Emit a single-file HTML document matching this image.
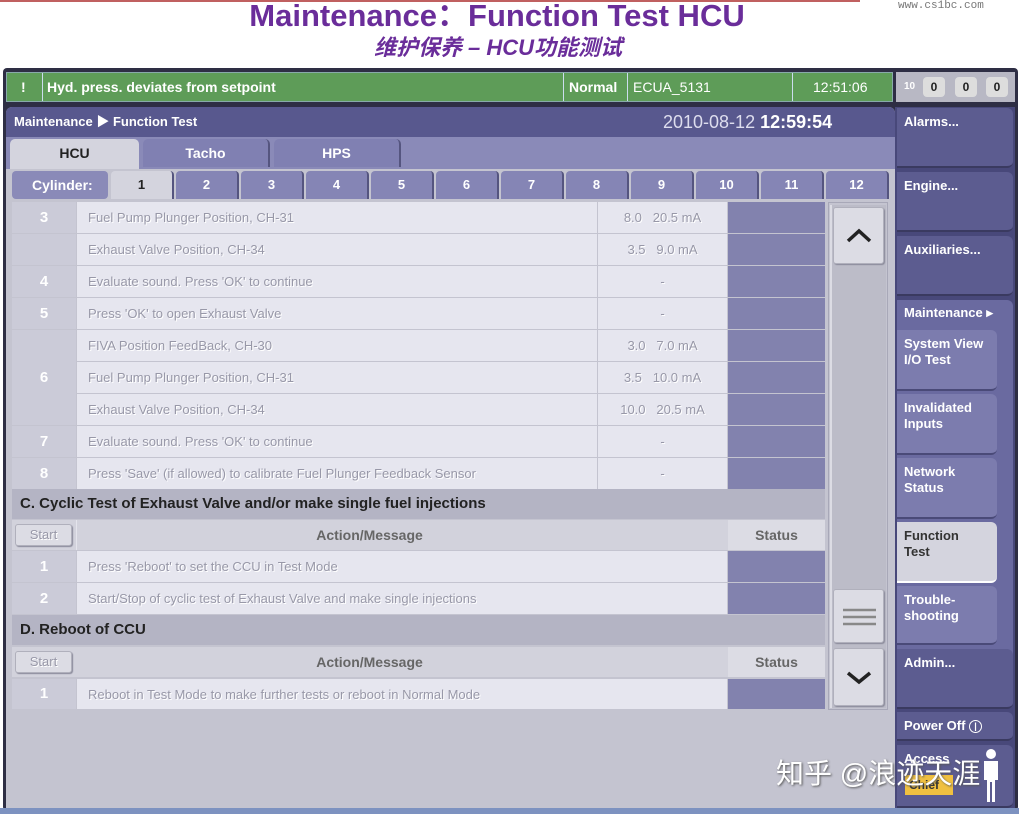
<!DOCTYPE html><html><head><meta charset="utf-8"><style>
*{margin:0;padding:0;box-sizing:border-box}
body{width:1019px;height:814px;position:relative;overflow:hidden;background:#fff;font-family:"Liberation Sans","Noto Sans CJK SC",sans-serif;font-weight:bold}
.a{position:absolute}
.row div{position:absolute;top:0;height:31px;line-height:31px}
.gt{color:#9898a8;font-weight:normal;font-size:13px;text-shadow:1px 1px 0 #fff}
.nav{position:absolute;left:897px;width:116px;background:#5c5c90;color:#fff;font-size:13px;padding:6px 7px;border-radius:0 6px 6px 0;border-bottom:2px solid #3a3a60}
.sub{position:absolute;left:897px;width:100px;background:#7c7cae;color:#fff;font-size:13px;padding:6px 7px;line-height:16px;border-radius:0 6px 6px 0;border-bottom:2px solid #4a4a78}
.ct{position:absolute;top:171px;height:28px;line-height:28px;text-align:center;background:#8585b5;color:#fff;font-size:13px;border-radius:4px 4px 0 0;border-right:2px solid #55557f}
.hdr{position:absolute;left:12px;width:813px;height:30px;background:#b4b4c4;color:#222;font-size:15px;line-height:30px;padding-left:8px}
.btn{position:absolute;background:#dcdce4;border:1px solid #b0b0bc;border-radius:3px;box-shadow:1px 1px 1px #8a8a9a}
</style></head><body>
<div class="a" style="left:0;top:0;width:860px;height:2px;background:#c06060"></div>
<div class="a" style="left:898px;top:0;font:11px 'Liberation Mono',monospace;color:#777">www.cs1bc.com</div>
<div class="a" style="left:0;top:0;width:994px;text-align:center;font-size:31px;color:#6a2d9a;line-height:32px">Maintenance：Function Test HCU</div>
<div class="a" style="left:0;top:34px;width:996px;text-align:center;font-size:22px;color:#6a2d9a;font-style:italic;line-height:28px">维护保养 – HCU功能测试</div>
<div class="a" style="left:3px;top:68px;width:1015px;height:743px;background:#2e2e44;border-radius:4px"></div>
<div class="a" style="left:0;top:808px;width:1019px;height:6px;background:#7d92c0"></div>
<!-- status bar -->
<div class="a" style="left:6px;top:72px;width:887px;height:30px;background:#5e9c58;border:1px solid #8aa;color:#fff;font-size:14px;line-height:28px">
<span class="a" style="left:14px">!</span><span class="a" style="left:35px;top:0;height:28px;border-left:1px solid #cde"></span>
<span class="a" style="left:40px">Hyd. press. deviates from setpoint</span>
<span class="a" style="left:556px;height:28px;border-left:1px solid #cde"></span><span class="a" style="left:562px">Normal</span>
<span class="a" style="left:620px;height:28px;border-left:1px solid #cde"></span><span class="a" style="left:626px;font-weight:normal">ECUA_5131</span>
<span class="a" style="left:785px;height:28px;border-left:1px solid #cde"></span><span class="a" style="left:806px;font-weight:normal">12:51:06</span></div>
<div class="a" style="left:896px;top:72px;width:119px;height:30px;background:#b8b8c4;font-size:12px;line-height:30px;color:#222">
<span class="a" style="left:8px;color:#fff;font-size:10px">10</span><span class="a" style="left:27px;top:5px;width:22px;height:20px;background:#ddd;border-radius:4px;line-height:20px;text-align:center">0</span><span class="a" style="left:59px;top:5px;width:22px;height:20px;background:#ddd;border-radius:4px;line-height:20px;text-align:center">0</span><span class="a" style="left:90px;top:5px;width:22px;height:20px;background:#ddd;border-radius:4px;line-height:20px;text-align:center">0</span></div>
<!-- main panel -->
<div class="a" style="left:6px;top:107px;width:889px;height:701px;background:#c4c4d0;border-radius:6px 6px 0 0"></div>
<div class="a" style="left:6px;top:107px;width:889px;height:30px;background:#58588e;border-radius:6px 6px 0 0;color:#fff;font-size:13px;line-height:30px;padding-left:8px">Maintenance ▶ Function Test<span class="a" style="left:657px;font-size:18px;font-weight:normal;color:#dde">2010-08-12 <b style="color:#fff">12:59:54</b></span></div>
<div class="a" style="left:6px;top:137px;width:889px;height:32px;background:#8a8ab8"></div>
<div class="a" style="left:10px;top:139px;width:129px;height:30px;background:#d4d4de;border-radius:5px 5px 0 0;text-align:center;line-height:28px;font-size:14px;color:#222">HCU</div>
<div class="a" style="left:143px;top:139px;width:127px;height:28px;background:#8080b2;border-radius:5px 5px 0 0;border-right:2px solid #55557f;text-align:center;line-height:28px;font-size:14px;color:#fff">Tacho</div>
<div class="a" style="left:274px;top:139px;width:127px;height:28px;background:#8080b2;border-radius:5px 5px 0 0;border-right:2px solid #55557f;text-align:center;line-height:28px;font-size:14px;color:#fff">HPS</div>
<div class="a" style="left:12px;top:171px;width:96px;height:28px;background:#8a8ab8;border-radius:4px;color:#fff;font-size:14px;line-height:28px;padding-left:20px">Cylinder:</div>
<div class="ct" style="left:111px;width:63px;background:#d4d4de;color:#222">1</div>
<div class="ct" style="left:176px;width:63px">2</div><div class="ct" style="left:241px;width:63px">3</div><div class="ct" style="left:306px;width:63px">4</div><div class="ct" style="left:371px;width:63px">5</div><div class="ct" style="left:436px;width:63px">6</div><div class="ct" style="left:501px;width:63px">7</div><div class="ct" style="left:566px;width:63px">8</div><div class="ct" style="left:631px;width:63px">9</div><div class="ct" style="left:696px;width:63px">10</div><div class="ct" style="left:761px;width:63px">11</div><div class="ct" style="left:826px;width:63px">12</div>
<!-- rows A/B -->
<div class="a" style="left:12px;top:202px;width:64px;height:31px;background:#cbcbd8;color:#fff;font-size:15px;text-align:center;line-height:31px">3</div>
<div class="a" style="left:12px;top:234px;width:64px;height:31px;background:#cbcbd8"></div>
<div class="a" style="left:12px;top:266px;width:64px;height:31px;background:#cbcbd8;color:#fff;font-size:15px;text-align:center;line-height:31px">4</div>
<div class="a" style="left:12px;top:298px;width:64px;height:31px;background:#cbcbd8;color:#fff;font-size:15px;text-align:center;line-height:31px">5</div>
<div class="a" style="left:12px;top:330px;width:64px;height:95px;background:#cbcbd8;color:#fff;font-size:15px;text-align:center;line-height:95px">6</div>
<div class="a" style="left:12px;top:426px;width:64px;height:31px;background:#cbcbd8;color:#fff;font-size:15px;text-align:center;line-height:31px">7</div>
<div class="a" style="left:12px;top:458px;width:64px;height:31px;background:#cbcbd8;color:#fff;font-size:15px;text-align:center;line-height:31px">8</div>
<div class="a row" style="left:0;top:202px"><div class="gt" style="left:77px;width:520px;background:#e6e6ef;padding-left:11px">Fuel Pump Plunger Position, CH-31</div><div class="gt" style="left:598px;width:129px;background:#e6e6ef;text-align:center">8.0 &nbsp; 20.5 mA</div><div style="left:728px;width:97px;background:#8282ae"></div></div>
<div class="a row" style="left:0;top:234px"><div class="gt" style="left:77px;width:520px;background:#e6e6ef;padding-left:11px">Exhaust Valve Position, CH-34</div><div class="gt" style="left:598px;width:129px;background:#e6e6ef;text-align:center">3.5 &nbsp; 9.0 mA</div><div style="left:728px;width:97px;background:#8282ae"></div></div>
<div class="a row" style="left:0;top:266px"><div class="gt" style="left:77px;width:520px;background:#e6e6ef;padding-left:11px">Evaluate sound. Press 'OK' to continue</div><div class="gt" style="left:598px;width:129px;background:#e6e6ef;text-align:center">-</div><div style="left:728px;width:97px;background:#8282ae"></div></div>
<div class="a row" style="left:0;top:298px"><div class="gt" style="left:77px;width:520px;background:#e6e6ef;padding-left:11px">Press 'OK' to open Exhaust Valve</div><div class="gt" style="left:598px;width:129px;background:#e6e6ef;text-align:center">-</div><div style="left:728px;width:97px;background:#8282ae"></div></div>
<div class="a row" style="left:0;top:330px"><div class="gt" style="left:77px;width:520px;background:#e6e6ef;padding-left:11px">FIVA Position FeedBack, CH-30</div><div class="gt" style="left:598px;width:129px;background:#e6e6ef;text-align:center">3.0 &nbsp; 7.0 mA</div><div style="left:728px;width:97px;background:#8282ae"></div></div>
<div class="a row" style="left:0;top:362px"><div class="gt" style="left:77px;width:520px;background:#e6e6ef;padding-left:11px">Fuel Pump Plunger Position, CH-31</div><div class="gt" style="left:598px;width:129px;background:#e6e6ef;text-align:center">3.5 &nbsp; 10.0 mA</div><div style="left:728px;width:97px;background:#8282ae"></div></div>
<div class="a row" style="left:0;top:394px"><div class="gt" style="left:77px;width:520px;background:#e6e6ef;padding-left:11px">Exhaust Valve Position, CH-34</div><div class="gt" style="left:598px;width:129px;background:#e6e6ef;text-align:center">10.0 &nbsp; 20.5 mA</div><div style="left:728px;width:97px;background:#8282ae"></div></div>
<div class="a row" style="left:0;top:426px"><div class="gt" style="left:77px;width:520px;background:#e6e6ef;padding-left:11px">Evaluate sound. Press 'OK' to continue</div><div class="gt" style="left:598px;width:129px;background:#e6e6ef;text-align:center">-</div><div style="left:728px;width:97px;background:#8282ae"></div></div>
<div class="a row" style="left:0;top:458px"><div class="gt" style="left:77px;width:520px;background:#e6e6ef;padding-left:11px">Press 'Save' (if allowed) to calibrate Fuel Plunger Feedback Sensor</div><div class="gt" style="left:598px;width:129px;background:#e6e6ef;text-align:center">-</div><div style="left:728px;width:97px;background:#8282ae"></div></div>
<!-- C -->
<div class="hdr" style="top:489px">C. Cyclic Test of Exhaust Valve and/or make single fuel injections</div>
<div class="a" style="left:12px;top:520px;width:813px;height:30px;background:#d2d2dc;color:#666;font-size:14px;line-height:30px"><span class="a" style="left:0;width:715px;text-align:center">Action/Message</span><span class="a" style="left:716px;width:97px;text-align:center;background:#dcdce4">Status</span><span class="a" style="left:64px;height:30px;border-left:1px solid #e4e4ec"></span></div>
<div class="btn gt" style="left:15px;top:524px;width:57px;height:22px;line-height:20px;text-align:center">Start</div>
<div class="a" style="left:12px;top:551px;width:64px;height:31px;background:#cbcbd8;color:#fff;font-size:15px;text-align:center;line-height:31px">1</div>
<div class="a" style="left:12px;top:583px;width:64px;height:31px;background:#cbcbd8;color:#fff;font-size:15px;text-align:center;line-height:31px">2</div>
<div class="a row" style="left:0;top:551px"><div class="gt" style="left:77px;width:650px;background:#e6e6ef;padding-left:11px">Press 'Reboot' to set the CCU in Test Mode</div><div style="left:728px;width:97px;background:#8282ae"></div></div>
<div class="a row" style="left:0;top:583px"><div class="gt" style="left:77px;width:650px;background:#e6e6ef;padding-left:11px">Start/Stop of cyclic test of Exhaust Valve and make single injections</div><div style="left:728px;width:97px;background:#8282ae"></div></div>
<!-- D -->
<div class="hdr" style="top:615px">D. Reboot of CCU</div>
<div class="a" style="left:12px;top:647px;width:813px;height:30px;background:#d2d2dc;color:#666;font-size:14px;line-height:30px"><span class="a" style="left:0;width:715px;text-align:center">Action/Message</span><span class="a" style="left:716px;width:97px;text-align:center;background:#dcdce4">Status</span></div>
<div class="btn gt" style="left:15px;top:651px;width:57px;height:22px;line-height:20px;text-align:center">Start</div>
<div class="a" style="left:12px;top:679px;width:64px;height:30px;background:#cbcbd8;color:#fff;font-size:15px;text-align:center;line-height:30px">1</div>
<div class="a row" style="left:0;top:679px"><div class="gt" style="left:77px;width:650px;background:#e6e6ef;padding-left:11px;height:30px">Reboot in Test Mode to make further tests or reboot in Normal Mode</div><div style="left:728px;width:97px;background:#8282ae;height:30px"></div></div>
<!-- scroll -->
<div class="a" style="left:828px;top:202px;width:60px;height:508px;background:#c4c4d0;border:1px solid #a8a8b8"></div>
<div class="a" style="left:830px;top:205px;width:56px;height:503px;background:#bcbcc8;border-left:2px solid #dcdce4"></div>
<div class="btn" style="left:833px;top:207px;width:51px;height:57px"><svg width="51" height="57"><path d="M14 33 L25 23 L36 33" stroke="#222" stroke-width="3.5" fill="none"/></svg></div>
<div class="btn" style="left:833px;top:589px;width:51px;height:54px"><svg width="51" height="54"><path d="M9 20H42M9 27H42M9 34H42" stroke="#888" stroke-width="2.5"/></svg></div>
<div class="btn" style="left:833px;top:648px;width:51px;height:58px"><svg width="51" height="58"><path d="M14 24 L25 33 L36 24" stroke="#222" stroke-width="3.5" fill="none"/></svg></div>
<!-- nav -->
<div class="a" style="left:895px;top:107px;width:120px;height:701px;background:#48487a"></div>
<div class="nav" style="top:108px;height:60px">Alarms...</div>
<div class="nav" style="top:172px;height:60px">Engine...</div>
<div class="nav" style="top:236px;height:60px">Auxiliaries...</div>
<div class="a" style="left:897px;top:300px;width:116px;height:408px;background:#6a6aa0;border-radius:0 6px 6px 0"></div>
<div class="a" style="left:904px;top:305px;color:#fff;font-size:13px">Maintenance ▸</div>
<div class="sub" style="top:330px;height:61px">System View<br>I/O Test</div>
<div class="sub" style="top:394px;height:61px">Invalidated<br>Inputs</div>
<div class="sub" style="top:458px;height:61px">Network<br>Status</div>
<div class="sub" style="top:522px;height:61px;background:#d4d4de;color:#333;border-bottom-color:#fff">Function<br>Test</div>
<div class="sub" style="top:586px;height:59px">Trouble-<br>shooting</div>
<div class="nav" style="top:649px;height:60px">Admin...</div>
<div class="nav" style="top:712px;height:29px">Power Off <span style="display:inline-block;width:13px;height:13px;border:1.5px solid #fff;border-radius:50%;font-size:9px;text-align:center;line-height:10px;vertical-align:middle">|</span></div>
<div class="nav" style="top:745px;height:63px">Access<div class="a" style="left:8px;top:30px;width:48px;height:20px;background:#f0c040;color:#333;font-size:12px;line-height:20px;padding-left:4px">Chief</div>
<svg class="a" style="left:84px;top:3px" width="20" height="56"><circle cx="10" cy="6" r="5" fill="#fff"/><path d="M3 13H17V32H14V54H11V34H9V54H6V32H3Z" fill="#fff"/></svg></div>
<div class="a" style="left:776px;top:752px;color:#fff;font-size:28px;font-weight:normal;text-shadow:1px 1px 2px #555">知乎 @浪迹天涯</div>
</body></html>
